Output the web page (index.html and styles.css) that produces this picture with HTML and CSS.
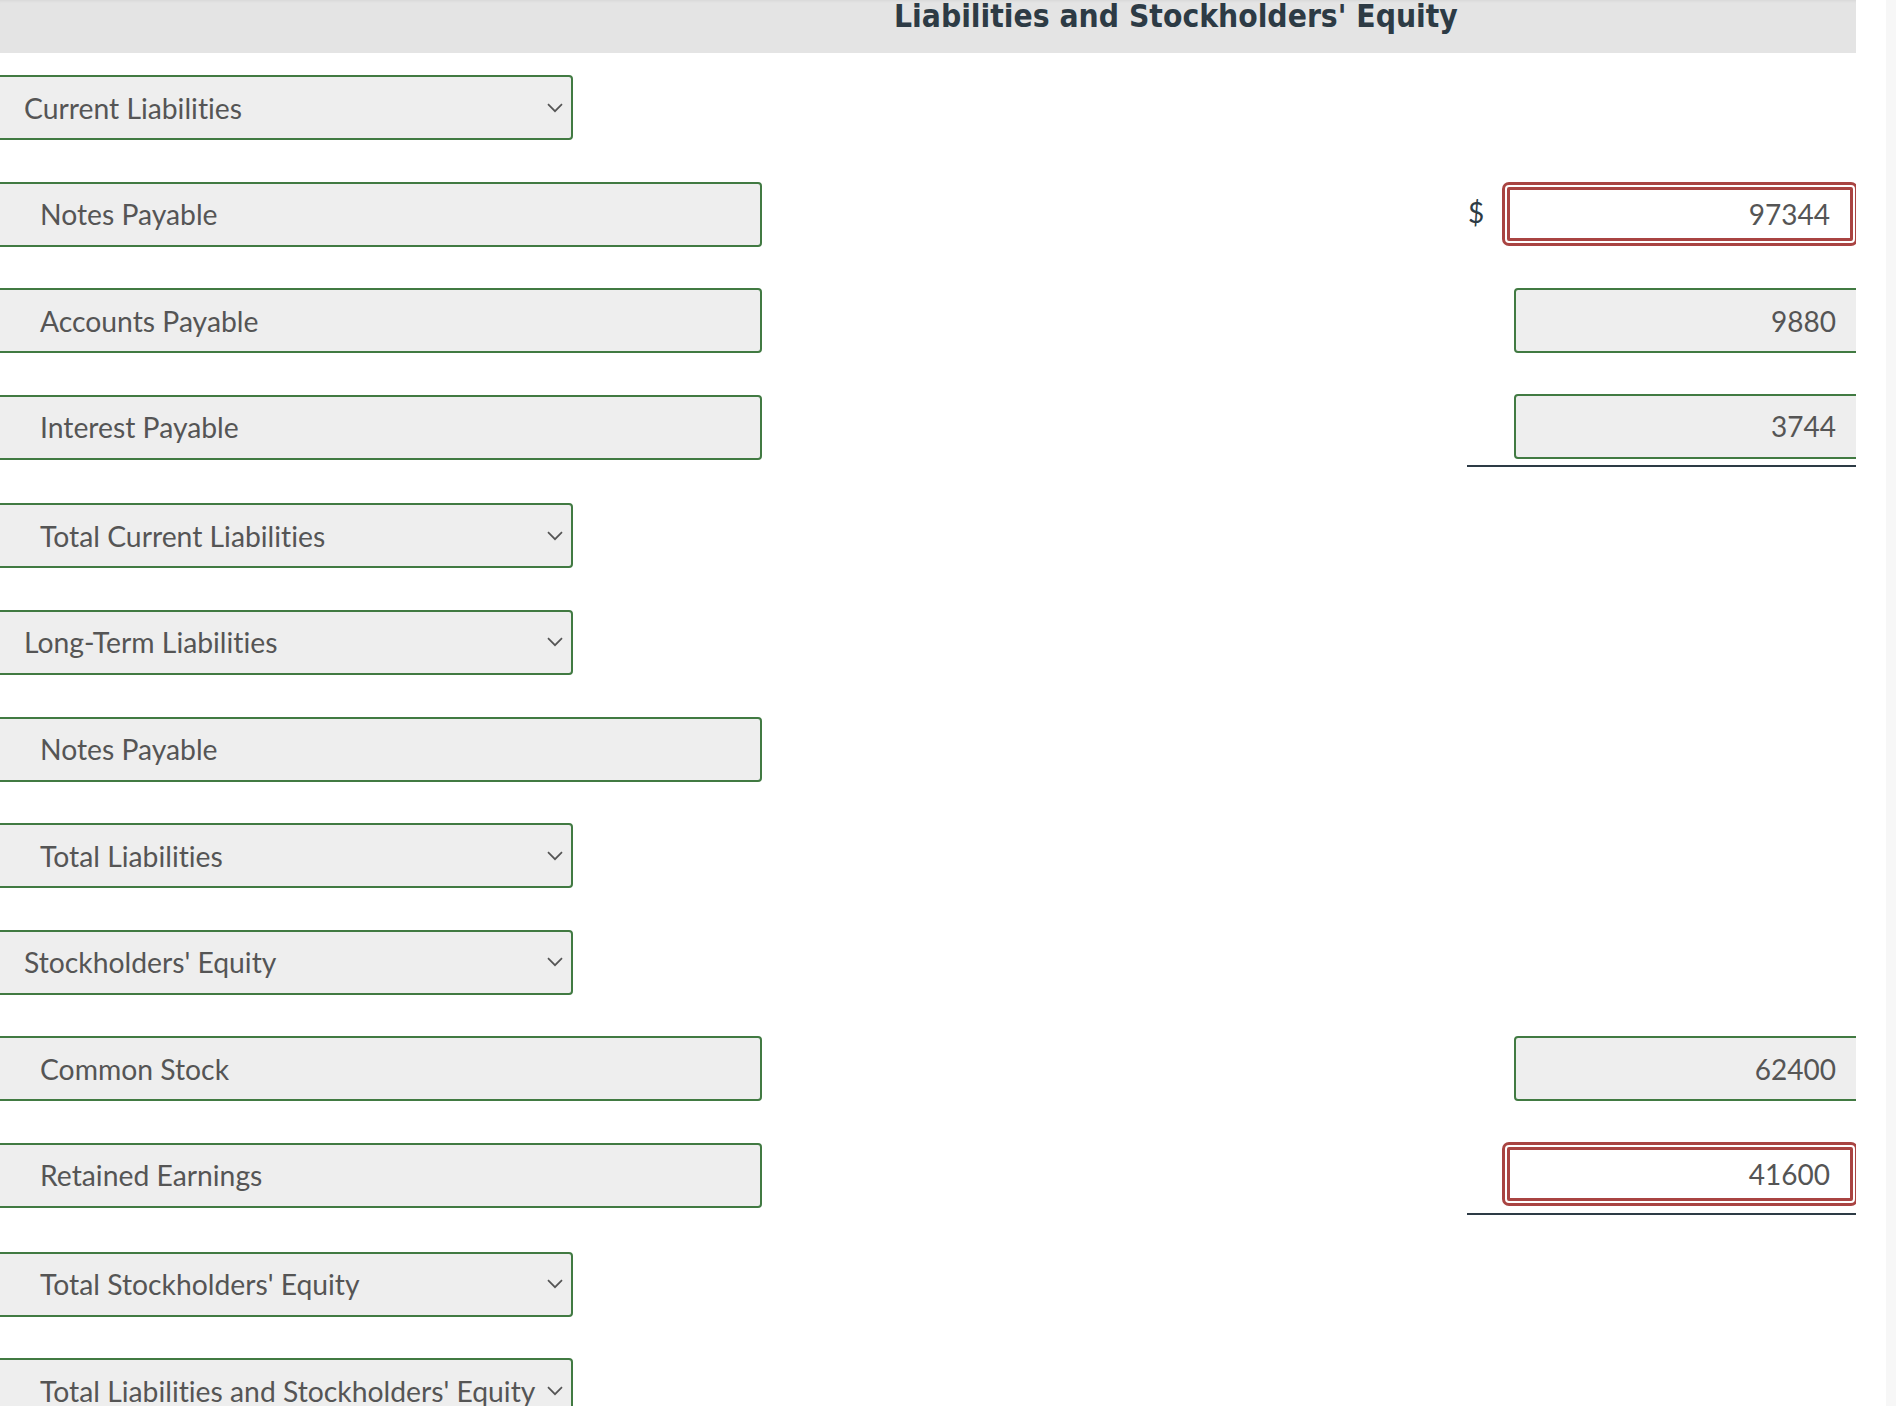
FILE: index.html
```html
<!DOCTYPE html>
<html lang="en">
<head>
<meta charset="utf-8">
<title>Liabilities and Stockholders' Equity</title>
<link rel="stylesheet" href="styles.css">
</head>
<body>
<div class="page">
  <div class="sheet">
    <div class="band">
      <h2 class="title">Liabilities and Stockholders' Equity</h2>
    </div>
    <div class="rows">
      <div class="row">
        <div class="select"><span>Current Liabilities</span><svg class="chev" width="16" height="10" viewBox="0 0 16 10"><path d="M1 1.2 L8 8.2 L15 1.2" fill="none" stroke="#555" stroke-width="1.7"/></svg></div>
      </div>
      <div class="row">
        <div class="field">Notes Payable</div>
        <div class="amount"><span class="cur">$</span><div class="num num-err">97344</div></div>
      </div>
      <div class="row">
        <div class="field">Accounts Payable</div>
        <div class="amount"><span class="cur"></span><div class="num">9880</div></div>
      </div>
      <div class="row">
        <div class="field">Interest Payable</div>
        <div class="amount ruled"><span class="cur"></span><div class="num">3744</div></div>
      </div>
      <div class="row">
        <div class="select select-indent"><span>Total Current Liabilities</span><svg class="chev" width="16" height="10" viewBox="0 0 16 10"><path d="M1 1.2 L8 8.2 L15 1.2" fill="none" stroke="#555" stroke-width="1.7"/></svg></div>
      </div>
      <div class="row">
        <div class="select"><span>Long-Term Liabilities</span><svg class="chev" width="16" height="10" viewBox="0 0 16 10"><path d="M1 1.2 L8 8.2 L15 1.2" fill="none" stroke="#555" stroke-width="1.7"/></svg></div>
      </div>
      <div class="row">
        <div class="field">Notes Payable</div>
      </div>
      <div class="row">
        <div class="select select-indent"><span>Total Liabilities</span><svg class="chev" width="16" height="10" viewBox="0 0 16 10"><path d="M1 1.2 L8 8.2 L15 1.2" fill="none" stroke="#555" stroke-width="1.7"/></svg></div>
      </div>
      <div class="row">
        <div class="select"><span>Stockholders' Equity</span><svg class="chev" width="16" height="10" viewBox="0 0 16 10"><path d="M1 1.2 L8 8.2 L15 1.2" fill="none" stroke="#555" stroke-width="1.7"/></svg></div>
      </div>
      <div class="row">
        <div class="field">Common Stock</div>
        <div class="amount"><span class="cur"></span><div class="num">62400</div></div>
      </div>
      <div class="row">
        <div class="field">Retained Earnings</div>
        <div class="amount ruled"><span class="cur"></span><div class="num num-err">41600</div></div>
      </div>
      <div class="row">
        <div class="select select-indent"><span>Total Stockholders' Equity</span><svg class="chev" width="16" height="10" viewBox="0 0 16 10"><path d="M1 1.2 L8 8.2 L15 1.2" fill="none" stroke="#555" stroke-width="1.7"/></svg></div>
      </div>
      <div class="row">
        <div class="select select-indent"><span>Total Liabilities and Stockholders' Equity</span><svg class="chev" width="16" height="10" viewBox="0 0 16 10"><path d="M1 1.2 L8 8.2 L15 1.2" fill="none" stroke="#555" stroke-width="1.7"/></svg></div>
      </div>
    </div>
  </div>
  <div class="gutter"></div>
  <div class="scrollbar"></div>
</div>
</body>
</html>
```

FILE: styles.css
```css
html, body {
  margin: 0;
  padding: 0;
  background: #ffffff;
  overflow: hidden;
}

.page {
  display: flex;
  width: 1896px;
  height: 1406px;
  overflow: hidden;
  font-family: Lato, "Liberation Sans", sans-serif;
  font-variant-ligatures: none;
}

.sheet {
  width: 1856px;
  flex: none;
  overflow: hidden;
}

.gutter {
  width: 30px;
  flex: none;
}

.scrollbar {
  width: 10px;
  flex: none;
  background: #f7f7f7;
}

.band {
  height: 53px;
  background: #e4e4e4;
  box-shadow: inset 0 3px 3px -2px rgba(0, 0, 0, 0.06);
  padding-left: 894px;
  box-sizing: border-box;
}

.title {
  margin: 0;
  font-family: "DejaVu Sans Condensed", "DejaVu Sans", sans-serif;
  font-weight: bold;
  font-size: 31.5px;
  line-height: 33px;
  color: #2d3b45;
  white-space: nowrap;
}

.rows {
  display: flex;
  flex-direction: column;
  gap: 41.6px;
  padding-top: 22px;
}

.row {
  display: flex;
  align-items: flex-start;
  height: 65px;
  flex: none;
}

.row:has(.ruled) {
  height: 67px;
}

.select,
.field {
  box-sizing: border-box;
  height: 65px;
  margin-left: -10px;
  background: #eeeeee;
  border: 2px solid #417a42;
  border-radius: 4px;
  color: #555555;
  font-size: 28.3px;
  display: flex;
  align-items: center;
  white-space: nowrap;
  flex: none;
}

.select {
  width: 583px;
  padding-left: 32px;
  padding-right: 8px;
  justify-content: space-between;
}

.select-indent {
  padding-left: 48px;
}

.field {
  width: 772px;
  padding-left: 48px;
}

.chev {
  flex: none;
  margin-left: 6px;
}

.amount {
  margin-left: auto;
  width: 389px;
  height: 65px;
  display: flex;
  align-items: center;
  flex: none;
  box-sizing: border-box;
}

.amount.ruled {
  height: 72px;
  padding-bottom: 7px;
  border-bottom: 2px solid #2d3b45;
  margin-bottom: -5px;
}

.cur {
  width: 35px;
  flex: none;
  font-size: 28px;
  color: #2d3b45;
  padding-left: 1px;
  box-sizing: border-box;
  margin-top: -4px;
}

.num {
  flex: none;
  box-sizing: border-box;
  margin-left: 12px;
  width: 362px;
  height: 65px;
  padding-right: 38px;
  background: #eeeeee;
  border: 2px solid #417a42;
  border-radius: 4px;
  color: #555555;
  font-size: 28px;
  display: flex;
  align-items: center;
  justify-content: flex-end;
}

.num-err {
  margin-left: 5px;
  width: 346px;
  height: 54px;
  padding-right: 20px;
  background: #ffffff;
  border: 3px solid #a94442;
  border-radius: 2px;
  outline: 3px solid #a94442;
  outline-offset: 2px;
}
```
